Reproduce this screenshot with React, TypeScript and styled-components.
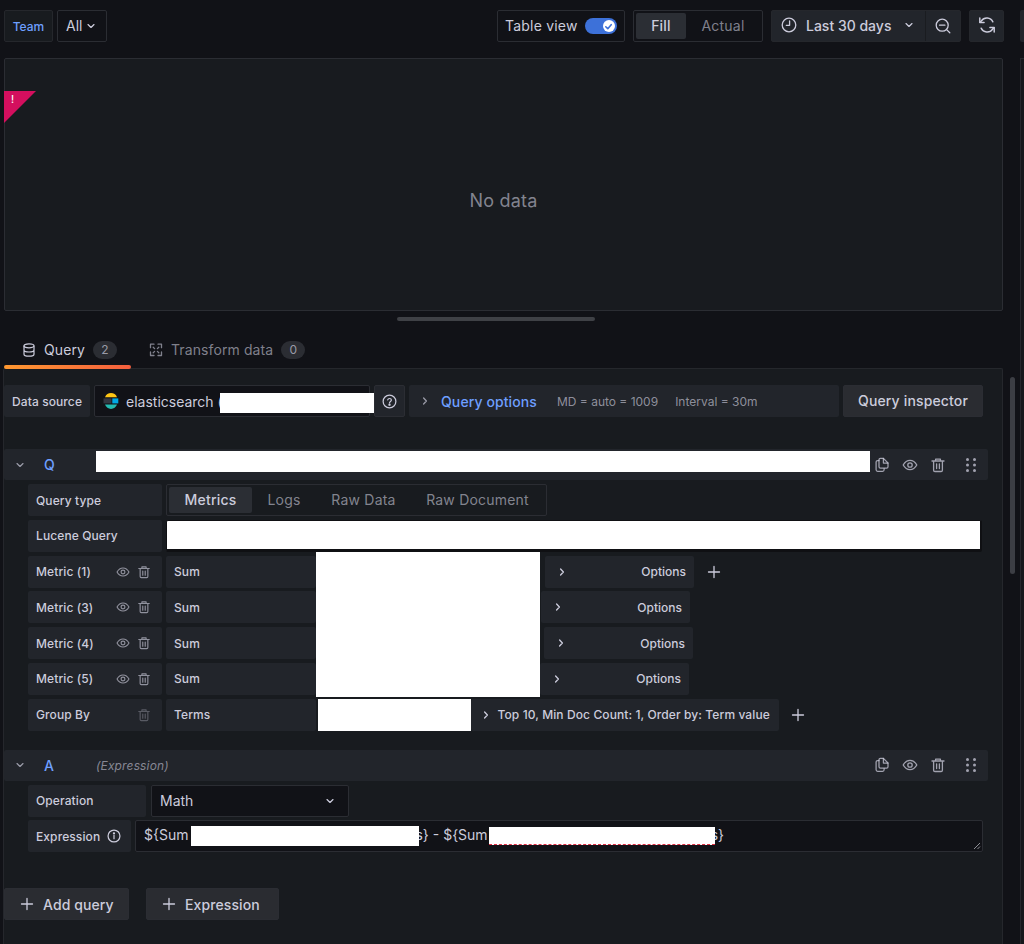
import React from "react";
import styled, { createGlobalStyle } from "styled-components";

const Global = createGlobalStyle`
  html, body { margin: 0; padding: 0; height: 944px; overflow: hidden; background: #111217; }
  body { font-family: Inter, "Noto Sans", sans-serif; color: #ccccdc; -webkit-font-smoothing: antialiased; }
  * { box-sizing: border-box; }
`;

const border = "#2b2d33";
const weak = "#25272c";

const Page = styled.div`
  width: 1024px; height: 944px; display: flex; overflow: hidden;
`;
const Main = styled.div`
  width: 1020px; flex: none; padding: 10px 0 0 3px; display: flex; flex-direction: column;
  & > * { flex: none; }
`;
const SideSliver = styled.div`
  flex: 1; display: flex; flex-direction: column; gap: 16px; padding-top: 10px;
`;
const SliverStub = styled.div`
  height: 32px; background: #22252b; border-radius: 2px 0 0 2px;
`;
const SliverPanel = styled.div`
  flex: 1; background: #15171b; border-left: 1px solid ${weak}; border-top: 1px solid ${weak};
`;

const Toolbar = styled.div`
  display: flex; align-items: center; height: 32px; width: 1000px; margin-left: 1px; gap: 4px;
`;
const TeamLabel = styled.div`
  width: 49px; height: 32px; display: flex; align-items: center; justify-content: center;
  background: #181b1f; border: 1px solid ${weak}; border-radius: 2px;
  font-size: 12px; font-weight: 500; color: #6e9fff;
`;
const AllSelect = styled.div`
  width: 50px; height: 32px; display: flex; align-items: center; padding: 0 0 1px 8px; gap: 3px;
  background: #111217; border: 1px solid ${border}; border-radius: 2px; font-size: 14px; color: #ccccdc;
`;
const Spacer = styled.div`flex: 1;`;
const ToggleBox = styled.div`
  width: 128px; height: 32px; display: flex; align-items: center; gap: 7px; padding: 0 0 2px 7px;
  border: 1px solid ${border}; border-radius: 2px; font-size: 14px; letter-spacing: 0.2px; color: #ccccdc;
  margin-right: 4px;
`;
const Switch = styled.div`
  position: relative; width: 32px; height: 16px; margin-top: 2px; border-radius: 8px; background: #3d71d9;
`;
const SwitchKnob = styled.div`
  position: absolute; right: 2px; top: 2px; width: 12px; height: 12px; border-radius: 50%;
  background: #fff; display: flex; align-items: center; justify-content: center;
`;
const RadioGroup = styled.div<{ $w: number }>`
  width: ${(p) => p.$w}px; height: 32px; display: flex; align-items: center; padding: 2px;
  border: 1px solid ${border}; border-radius: 2px;
`;
const RadioOption = styled.div<{ $w: number; $active?: boolean }>`
  width: ${(p) => p.$w}px; height: 26px; display: flex; align-items: center; justify-content: center;
  font-size: 14px; letter-spacing: 0.2px; border-radius: 2px; padding-bottom: 2px;
  font-weight: ${(p) => (p.$active ? 500 : 400)};
  background: ${(p) => (p.$active ? "#2b2e34" : "transparent")};
  color: ${(p) => (p.$active ? "#ccccdc" : "rgba(204,204,220,.6)")};
`;
const TimeGroup = styled.div`
  width: 190px; height: 32px; margin-left: 4px; display: flex; background: #22252b; border: 1px solid ${weak}; border-radius: 2px;
`;
const TimeButton = styled.div`
  flex: 1; display: flex; align-items: center; padding: 0 0 2px 9px; gap: 9px; font-size: 14px;
  font-weight: 500; color: #ccccdc; border-right: 1px solid #1a1c20; white-space: nowrap;
`;
const TimeCaret = styled.span`display: flex; margin-left: 3px;`;
const IconSquare = styled.div<{ $w: number; $ml?: number }>`
  width: ${(p) => p.$w}px; height: 32px; flex: none; display: flex; align-items: center; justify-content: center;
  margin-left: ${(p) => p.$ml ?? 0}px; padding-bottom: 2px;
`;
const RefreshBox = styled(IconSquare)`
  background: #22252b; border: 1px solid ${weak}; border-radius: 2px;
`;

const VizPanel = styled.div`
  position: relative; width: 999px; height: 253px; margin: 16px 0 0 1px; display: flex; align-items: center; justify-content: center;
  background: #181b1f; border: 1px solid ${border}; border-radius: 2px;
`;
const NoData = styled.div`
  font-size: 18px; letter-spacing: 0.2px; color: rgba(204,204,220,.6); margin-top: 31px;
`;
const ErrorCorner = styled.div`
  position: absolute; left: -1px; top: 32px; width: 32px; height: 32px; background: #d40f5e;
  clip-path: polygon(0 0, 100% 0, 0 100%);
`;
const ErrorMark = styled.span`
  position: absolute; left: 7px; top: 2px; font-size: 10px; font-weight: 500; color: #fff; line-height: 12px;
`;
const Resizer = styled.div`
  width: 198px; height: 4px; margin: 6px 0 0 394px; background: #3f4146; border-radius: 2px;
`;

const Tabs = styled.div`
  display: flex; height: 48px; padding: 18px 0 0 1px; width: 1000px;
`;
const Tab = styled.div<{ $active?: boolean; $w: number }>`
  position: relative; flex: none; width: ${(p) => p.$w}px; height: 30px; display: flex; align-items: center; padding: 0 0 9px 18px; gap: 8px;
  font-size: 14px; letter-spacing: 0.1px; color: ${(p) => (p.$active ? "#ccccdc" : "rgba(204,204,220,.6)")};
  ${(p) =>
    p.$active
      ? `&::after { content: ""; position: absolute; left: 0; right: 0; bottom: 0; height: 4px; border-radius: 2px; background: linear-gradient(90deg, #ff9830, #f55f3e); }`
      : ""}
`;
const Badge = styled.span`
  width: 24px; height: 18px; border-radius: 9px; display: flex; align-items: center; justify-content: center;
  background: #2b2d33; font-size: 12px; color: rgba(204,204,220,.7);
`;

const EditorRow = styled.div`display: flex;`;
const Editor = styled.div`
  width: 1000px; height: 580px; flex: none; margin-top: -1px; padding: 16px 0 0 0; background: #181b1f;
  border: 1px solid ${weak}; border-bottom: none; border-radius: 2px 2px 0 0;
`;
const ScrollGutter = styled.div`
  flex: none; width: 16px; padding: 8px 0 0 7px;
`;
const ScrollThumb = styled.div`
  width: 5px; height: 197px; background: #3c3e44; border-radius: 3px;
`;

const DsRow = styled.div`
  display: flex; gap: 4px; height: 32px; margin-bottom: 32px;
`;
const InlineLabel = styled.div<{ $w: number }>`
  flex: none; width: ${(p) => p.$w}px; height: 32px; display: flex; align-items: center; padding-left: 8px;
  background: #22252b; border-radius: 2px; font-size: 12px; font-weight: 500; color: #ccccdc;
  letter-spacing: 0.1px;
`;
const DsSelect = styled.div`
  position: relative; width: 276px; height: 32px; display: flex; align-items: center; gap: 7px; padding-left: 8px;
  background: #111217; border: 1px solid ${border}; border-radius: 2px; font-size: 14px; color: #ccccdc;
`;
const DsRedaction = styled.div`
  position: absolute; left: 125px; top: 7px; width: 154px; height: 20px; background: #fff;
`;
const HelpBox = styled.div`
  width: 31px; height: 32px; display: flex; align-items: center; justify-content: center;
  background: #22252b; border: 1px solid ${border}; border-radius: 2px;
`;
const QueryOptions = styled.div`
  width: 430px; height: 32px; display: flex; align-items: center; padding-left: 10px; background: #22252b; border-radius: 2px;
`;
const OptionsTitle = styled.span`
  font-size: 14px; font-weight: 500; color: #6e9fff; margin-left: 10px; margin-right: 20px; letter-spacing: 0.1px;
`;
const OptionsMeta = styled.span`
  font-size: 12px; color: rgba(204,204,220,.65); margin-right: 17px;
`;
const InspectorButton = styled.div`
  width: 140px; height: 32px; display: flex; align-items: center; justify-content: center; padding-bottom: 1px;
  background: #2a2c31; border: 1px solid ${border}; border-radius: 2px; font-size: 14px; font-weight: 500; color: #ccccdc; letter-spacing: 0.15px;
`;

const QueryHeader = styled.div`
  width: 984px; height: 31px; display: flex; align-items: center; background: #22252b; border-radius: 2px; padding-left: 10px;
`;
const RefId = styled.span`
  width: 52px; margin-left: 18px; font-size: 14px; font-weight: 500; color: #6e9fff;
`;
const QueryName = styled.div`
  width: 774px; height: 21px; margin-top: -6px; background: #fff;
`;
const ExpressionTag = styled.span`
  font-size: 12px; font-style: italic; color: rgba(204,204,220,.6); width: 774px; letter-spacing: 0.15px;
`;
const HeaderIcons = styled.div`
  display: flex; align-items: center; gap: 12px; padding-left: 4px; color: rgba(204,204,220,.75);
`;
const DragDots = styled.span`display: flex; margin-left: 7px;`;

const Body = styled.div`
  padding: 4px 0 0 24px; display: flex; flex-direction: column; gap: 4px;
`;
const Row = styled.div`display: flex; align-items: flex-start; gap: 4px; height: 31.8px;`;
const QueryTypeGroup = styled.div`
  width: 381px; height: 32px; display: flex; align-items: center; padding: 2px; border: 1px solid ${border}; border-radius: 2px;
`;
const RedactedInput = styled.div`
  width: 816px; height: 32px; background: #fff; border: 1px solid #0f1013; border-right-width: 2px; border-bottom-width: 3px; border-radius: 2px;
`;
const MetricList = styled.div`
  position: relative; display: flex; flex-direction: column; gap: 4px;
`;
const MetricRedaction = styled.div`
  position: absolute; left: 288px; top: -4px; width: 224px; height: 145px; background: #fff;
`;
const GroupRedaction = styled.div`
  width: 153px; height: 32px; margin: 0 0 0 -2px; background: #fff; flex: none;
`;
const LabelText = styled.span`flex: 1;`;
const LabelIcons = styled.span`
  display: flex; gap: 7px; padding-right: 11px; color: rgba(204,204,220,.65); align-items: center;
`;
const DimIcon = styled.span`display: flex; opacity: .5;`;
const ValueCell = styled.div`
  flex: none; width: 149.5px; height: 32px; display: flex; align-items: center; padding-left: 8px;
  background: #22252b; border-radius: 2px; font-size: 12px; font-weight: 500; color: #ccccdc; letter-spacing: 0.1px;
`;
const OptionsGap = styled.div<{ $w: number }>`flex: none; width: ${(p) => p.$w}px;`;
const OptionsCell = styled.div`
  flex: none; width: 149px; height: 32px; display: flex; align-items: center; justify-content: space-between;
  padding: 0 8px 0 11px; background: #22252b; border-radius: 2px; font-size: 12px; font-weight: 500; color: #ccccdc;
`;
const SettingsCell = styled.div`
  flex: none; width: 308px; height: 32px; display: flex; align-items: center; gap: 6px; padding-left: 9px;
  margin-left: -4px; background: #22252b; border-radius: 2px; font-size: 12px; font-weight: 500; color: #ccccdc; letter-spacing: 0.1px;
`;
const PlusWrap = styled.span<{ $ml: number }>`
  display: flex; height: 32px; align-items: center; margin-left: ${(p) => p.$ml}px; color: #ccccdc;
`;
const SecondBlock = styled.div`margin-top: 19px;`;
const MathSelect = styled.div`
  width: 198px; height: 32px; display: flex; align-items: center; justify-content: space-between; padding: 0 12px 0 8px; margin-left: 1px;
  background: #111217; border: 1px solid ${border}; border-radius: 2px; font-size: 14px; color: #ccccdc;
`;
const ExpressionLabelInfo = styled.span`display: flex; margin-left: 7px;`;
const ExpressionBox = styled.div`
  position: relative; width: 848px; height: 32px; display: flex; align-items: center; padding: 0 0 3px 8px;
  background: #111217; border: 1px solid ${border}; border-radius: 2px; font-size: 14px; color: #ccccdc; white-space: pre;
`;
const RedactedWord = styled.span<{ $w: number; $ml: number; $dotted?: boolean }>`
  position: relative; z-index: 1; display: inline-block; flex: none; width: ${(p) => p.$w}px; margin: 3px -4px 0 ${(p) => p.$ml}px; background: #fff;
  height: ${(p) => (p.$dotted ? 18 : 20)}px;
  ${(p) => (p.$dotted ? "border-bottom: 1px dashed #e02f44;" : "")}
`;
const ResizeGrip = styled.span`
  position: absolute; right: 1px; bottom: 1px; display: flex;
`;
const ActionRow = styled.div`
  display: flex; gap: 17px; margin-top: 36px;
`;
const AddButton = styled.div<{ $w: number }>`
  width: ${(p) => p.$w}px; height: 32px; display: flex; align-items: center; gap: 9px; padding-left: 15px;
  background: #2a2c31; border: 1px solid ${border}; border-radius: 2px; font-size: 14px; font-weight: 500; color: #ccccdc; letter-spacing: 0.1px;
`;
const ErrorLayer = styled.div`
  position: absolute; left: -1px; top: 32px; width: 32px; height: 32px;
`;

const Chevron = ({ dir = "down", size = 12, color = "currentColor" }: { dir?: "down" | "right"; size?: number; color?: string }) => (
  <svg width={size} height={size} viewBox="0 0 12 12" fill="none" stroke={color} strokeWidth="1.3" strokeLinecap="round" strokeLinejoin="round">
    {dir === "down" ? <path d="M3 4.6 6 7.4 9 4.6" /> : <path d="M4.6 3 7.4 6 4.6 9" />}
  </svg>
);
const Eye = ({ size = 14 }: { size?: number }) => (
  <svg width={size} height={size} viewBox="0 0 16 16" fill="none" stroke="currentColor" strokeWidth="1.3">
    <path d="M1.2 8C3 4.8 5.3 3.4 8 3.4s5 1.4 6.8 4.6C13 11.2 10.7 12.6 8 12.6S3 11.2 1.2 8Z" strokeLinejoin="round" />
    <circle cx="8" cy="8" r="2.2" />
  </svg>
);
const Trash = ({ size = 14 }: { size?: number }) => (
  <svg width={size} height={size} viewBox="0 0 16 16" fill="none" stroke="currentColor" strokeWidth="1.3" strokeLinecap="round" strokeLinejoin="round">
    <path d="M2 4h12M5.6 4V2.2h4.8V4M3.6 4v9.2c0 .8.5 1.3 1.3 1.3h6.2c.8 0 1.3-.5 1.3-1.3V4M6.6 6.8v4.8M9.4 6.8v4.8" />
  </svg>
);
const Copy = () => (
  <svg width="16" height="16" viewBox="0 0 16 16" fill="none" stroke="currentColor" strokeWidth="1.25" strokeLinecap="round" strokeLinejoin="round">
    <path d="M5 3.6H3.6c-.9 0-1.5.6-1.5 1.5v7.7c0 .9.6 1.5 1.5 1.5h5c.9 0 1.5-.6 1.5-1.5v-1.1" />
    <path d="M5 2.8c0-.8.6-1.4 1.4-1.4h3L14 6v3.8c0 .8-.6 1.4-1.4 1.4H6.4C5.6 11.2 5 10.6 5 9.8Z" />
    <path d="M9.4 1.4V6H14" />
  </svg>
);
const Dots = () => (
  <svg width="12" height="16" viewBox="0 0 12 16" fill="currentColor">
    {[2.5, 8, 13.5].map((y) => (
      <g key={y}>
        <circle cx="2.5" cy={y} r="1.5" />
        <circle cx="9.5" cy={y} r="1.5" />
      </g>
    ))}
  </svg>
);
const Plus = ({ size = 14 }: { size?: number }) => (
  <svg width={size} height={size} viewBox="0 0 14 14" stroke="currentColor" strokeWidth="1.3" strokeLinecap="round">
    <path d="M7 1.5v11M1.5 7h11" />
  </svg>
);
const Clock = () => (
  <svg width="16" height="16" viewBox="0 0 16 16" fill="none" stroke="currentColor" strokeWidth="1.3" strokeLinecap="round" strokeLinejoin="round">
    <circle cx="8" cy="8" r="6.8" />
    <path d="M8.6 4v4.3H5.3" />
  </svg>
);
const ZoomOut = () => (
  <svg width="16" height="16" viewBox="0 0 16 16" fill="none" stroke="currentColor" strokeWidth="1.3" strokeLinecap="round">
    <circle cx="7.2" cy="7.2" r="6" />
    <path d="M4.5 7.2h5.4M11.6 11.6l3.2 3.2" />
  </svg>
);
const Sync = () => (
  <svg width="18" height="18" viewBox="0 0 16 16" fill="none" stroke="currentColor" strokeWidth="1.3" strokeLinecap="round" strokeLinejoin="round">
    <path d="M13.2 5.2A5.9 5.9 0 0 0 3 4.4L1.8 5.6" />
    <path d="M1.6 1.8v3.9h3.8" />
    <path d="M2.8 10.8A5.9 5.9 0 0 0 13 11.6l1.2-1.2" />
    <path d="M14.4 14.2v-3.9h-3.8" />
  </svg>
);
const DatabaseIcon = () => (
  <svg width="14" height="14" viewBox="0 0 14 14" fill="none" stroke="currentColor" strokeWidth="1.2">
    <ellipse cx="7" cy="2.8" rx="5" ry="2" />
    <path d="M2 2.8v8.4c0 1.1 2.2 2 5 2s5-.9 5-2V2.8M2 7c0 1.1 2.2 2 5 2s5-.9 5-2" />
  </svg>
);
const TransformIcon = () => (
  <svg width="14" height="14" viewBox="0 0 14 14" fill="none" stroke="currentColor" strokeWidth="1.3" strokeLinecap="round" strokeLinejoin="round">
    <path d="M5 1.2H1.5v3.500M9 1.200h3.500v3.500M12.500 9v3.500H9M5 12.500H1.500V9" />
    <path d="M4.200 4.200 5.600 5.600M9.800 4.200 8.400 5.600M4.200 9.800l1.400-1.400M9.800 9.800 8.400 8.400" />
  </svg>
);
const ElasticLogo = () => (
  <svg width="16" height="18" viewBox="0 0 16 18">
    <path d="M2 5.2C3 2.4 5.3 1 8 1s5 1.4 6 4.2Z" fill="#fec514" />
    <rect x="0.5" y="6.4" width="8" height="5" fill="#343741" />
    <rect x="9.3" y="6.4" width="6" height="5" fill="#00a9e5" />
    <path d="M2 12.6C3 15.4 5.3 17 8 17s5-1.6 6-4.4Z" fill="#24bbb1" />
  </svg>
);
const HelpIcon = () => (
  <svg width="15" height="15" viewBox="0 0 16 16" fill="none" stroke="#ccccdc" strokeWidth="1.3" strokeLinecap="round">
    <circle cx="8" cy="8" r="6.8" />
    <path d="M6.1 6.3A2 2 0 0 1 8 4.8c1.1 0 2 .7 2 1.7 0 1.500-2 1.500-2 3" />
    <circle cx="8" cy="11.4" r=".6" fill="#ccccdc" />
  </svg>
);
const InfoIcon = () => (
  <svg width="14" height="14" viewBox="0 0 16 16" fill="none" stroke="#ccccdc" strokeWidth="1.4" strokeLinecap="round">
    <circle cx="8" cy="8" r="6.8" />
    <path d="M8 7.4v3.600" />
    <circle cx="8" cy="5" r=".6" fill="#ccccdc" />
  </svg>
);

const HeaderActions = () => (
  <HeaderIcons>
    <Copy />
    <Eye size={16} />
    <Trash size={16} />
    <DragDots><Dots /></DragDots>
  </HeaderIcons>
);

const metrics = [
  { name: "Metric (1)", gap: 221.5, plus: true },
  { name: "Metric (3)", gap: 217.5 },
  { name: "Metric (4)", gap: 220.5 },
  { name: "Metric (5)", gap: 216.5 },
];

export default function App() {
  return (
    <Page>
      <Global />
      <Main>
        <Toolbar>
          <TeamLabel>Team</TeamLabel>
          <AllSelect>All<Chevron /></AllSelect>
          <Spacer />
          <ToggleBox>
            Table view
            <Switch>
              <SwitchKnob>
                <svg width="9" height="9" viewBox="0 0 10 10" fill="none" stroke="#3d71d9" strokeWidth="1.8" strokeLinecap="round" strokeLinejoin="round">
                  <path d="M2 5.3 4.200 7.500 8 3" />
                </svg>
              </SwitchKnob>
            </Switch>
          </ToggleBox>
          <RadioGroup $w={130}>
            <RadioOption $w={50} $active>Fill</RadioOption>
            <RadioOption $w={74}>Actual</RadioOption>
          </RadioGroup>
          <TimeGroup>
            <TimeButton>
              <Clock />
              Last 30 days
              <TimeCaret><Chevron /></TimeCaret>
            </TimeButton>
            <IconSquare $w={34}><ZoomOut /></IconSquare>
          </TimeGroup>
          <RefreshBox $w={35} $ml={4}><Sync /></RefreshBox>
        </Toolbar>

        <VizPanel>
          <ErrorCorner />
          <ErrorLayer><ErrorMark>!</ErrorMark></ErrorLayer>
          <NoData>No data</NoData>
        </VizPanel>
        <Resizer />

        <Tabs>
          <Tab $active $w={127}>
            <DatabaseIcon />
            Query
            <Badge>2</Badge>
          </Tab>
          <Tab $w={200}>
            <TransformIcon />
            Transform data
            <Badge>0</Badge>
          </Tab>
        </Tabs>

        <EditorRow>
          <Editor>
            <DsRow>
              <InlineLabel $w={86}>Data source</InlineLabel>
              <DsSelect>
                <ElasticLogo />
                elasticsearch (
                <DsRedaction />
              </DsSelect>
              <HelpBox><HelpIcon /></HelpBox>
              <QueryOptions>
                <Chevron dir="right" color="rgba(204,204,220,.7)" />
                <OptionsTitle>Query options</OptionsTitle>
                <OptionsMeta>MD = auto = 1009</OptionsMeta>
                <OptionsMeta>Interval = 30m</OptionsMeta>
              </QueryOptions>
              <InspectorButton>Query inspector</InspectorButton>
            </DsRow>

            <QueryHeader>
              <Chevron color="rgba(204,204,220,.7)" />
              <RefId>Q</RefId>
              <QueryName />
              <HeaderActions />
            </QueryHeader>
            <Body>
              <Row>
                <InlineLabel $w={134}>Query type</InlineLabel>
                <QueryTypeGroup>
                  <RadioOption $w={83} $active>Metrics</RadioOption>
                  <RadioOption $w={64}>Logs</RadioOption>
                  <RadioOption $w={95}>Raw Data</RadioOption>
                  <RadioOption $w={133}>Raw Document</RadioOption>
                </QueryTypeGroup>
              </Row>
              <Row>
                <InlineLabel $w={134}>Lucene Query</InlineLabel>
                <RedactedInput />
              </Row>
              <MetricList>
                {metrics.map((m) => (
                  <Row key={m.name}>
                    <InlineLabel $w={134}>
                      <LabelText>{m.name}</LabelText>
                      <LabelIcons><Eye /><Trash /></LabelIcons>
                    </InlineLabel>
                    <ValueCell>Sum</ValueCell>
                    <OptionsGap $w={m.gap} />
                    <OptionsCell>
                      <Chevron dir="right" />
                      Options
                    </OptionsCell>
                    {m.plus && <PlusWrap $ml={9}><Plus /></PlusWrap>}
                  </Row>
                ))}
                <MetricRedaction />
              </MetricList>
              <Row>
                <InlineLabel $w={134}>
                  <LabelText>Group By</LabelText>
                  <LabelIcons><DimIcon><Trash /></DimIcon></LabelIcons>
                </InlineLabel>
                <ValueCell>Terms</ValueCell>
                <GroupRedaction />
                <SettingsCell>
                  <Chevron dir="right" />
                  Top 10, Min Doc Count: 1, Order by: Term value
                </SettingsCell>
                <PlusWrap $ml={8}><Plus /></PlusWrap>
              </Row>
            </Body>

            <SecondBlock>
              <QueryHeader>
                <Chevron color="rgba(204,204,220,.7)" />
                <RefId>A</RefId>
                <ExpressionTag>(Expression)</ExpressionTag>
                <HeaderActions />
              </QueryHeader>
              <Body>
                <Row>
                  <InlineLabel $w={118}>Operation</InlineLabel>
                  <MathSelect>Math<Chevron /></MathSelect>
                </Row>
                <Row>
                  <InlineLabel $w={103}>
                    Expression
                    <ExpressionLabelInfo><InfoIcon /></ExpressionLabelInfo>
                  </InlineLabel>
                  <ExpressionBox>
                    {"${Sum"}
                    <RedactedWord $w={228} $ml={3} />
                    {"s} - ${Sum"}
                    <RedactedWord $w={226} $ml={1} $dotted />
                    {"s}"}
                    <ResizeGrip>
                      <svg width="9" height="9" viewBox="0 0 9 9" stroke="#8e8f96" strokeWidth="1">
                        <path d="M8 2 2 8M8 5.5 5.5 8" />
                      </svg>
                    </ResizeGrip>
                  </ExpressionBox>
                </Row>
              </Body>
            </SecondBlock>

            <ActionRow>
              <AddButton $w={125}><Plus />Add query</AddButton>
              <AddButton $w={133}><Plus />Expression</AddButton>
            </ActionRow>
          </Editor>
          <ScrollGutter><ScrollThumb /></ScrollGutter>
        </EditorRow>
      </Main>
      <SideSliver>
        <SliverStub />
        <SliverPanel />
      </SideSliver>
    </Page>
  );
}
